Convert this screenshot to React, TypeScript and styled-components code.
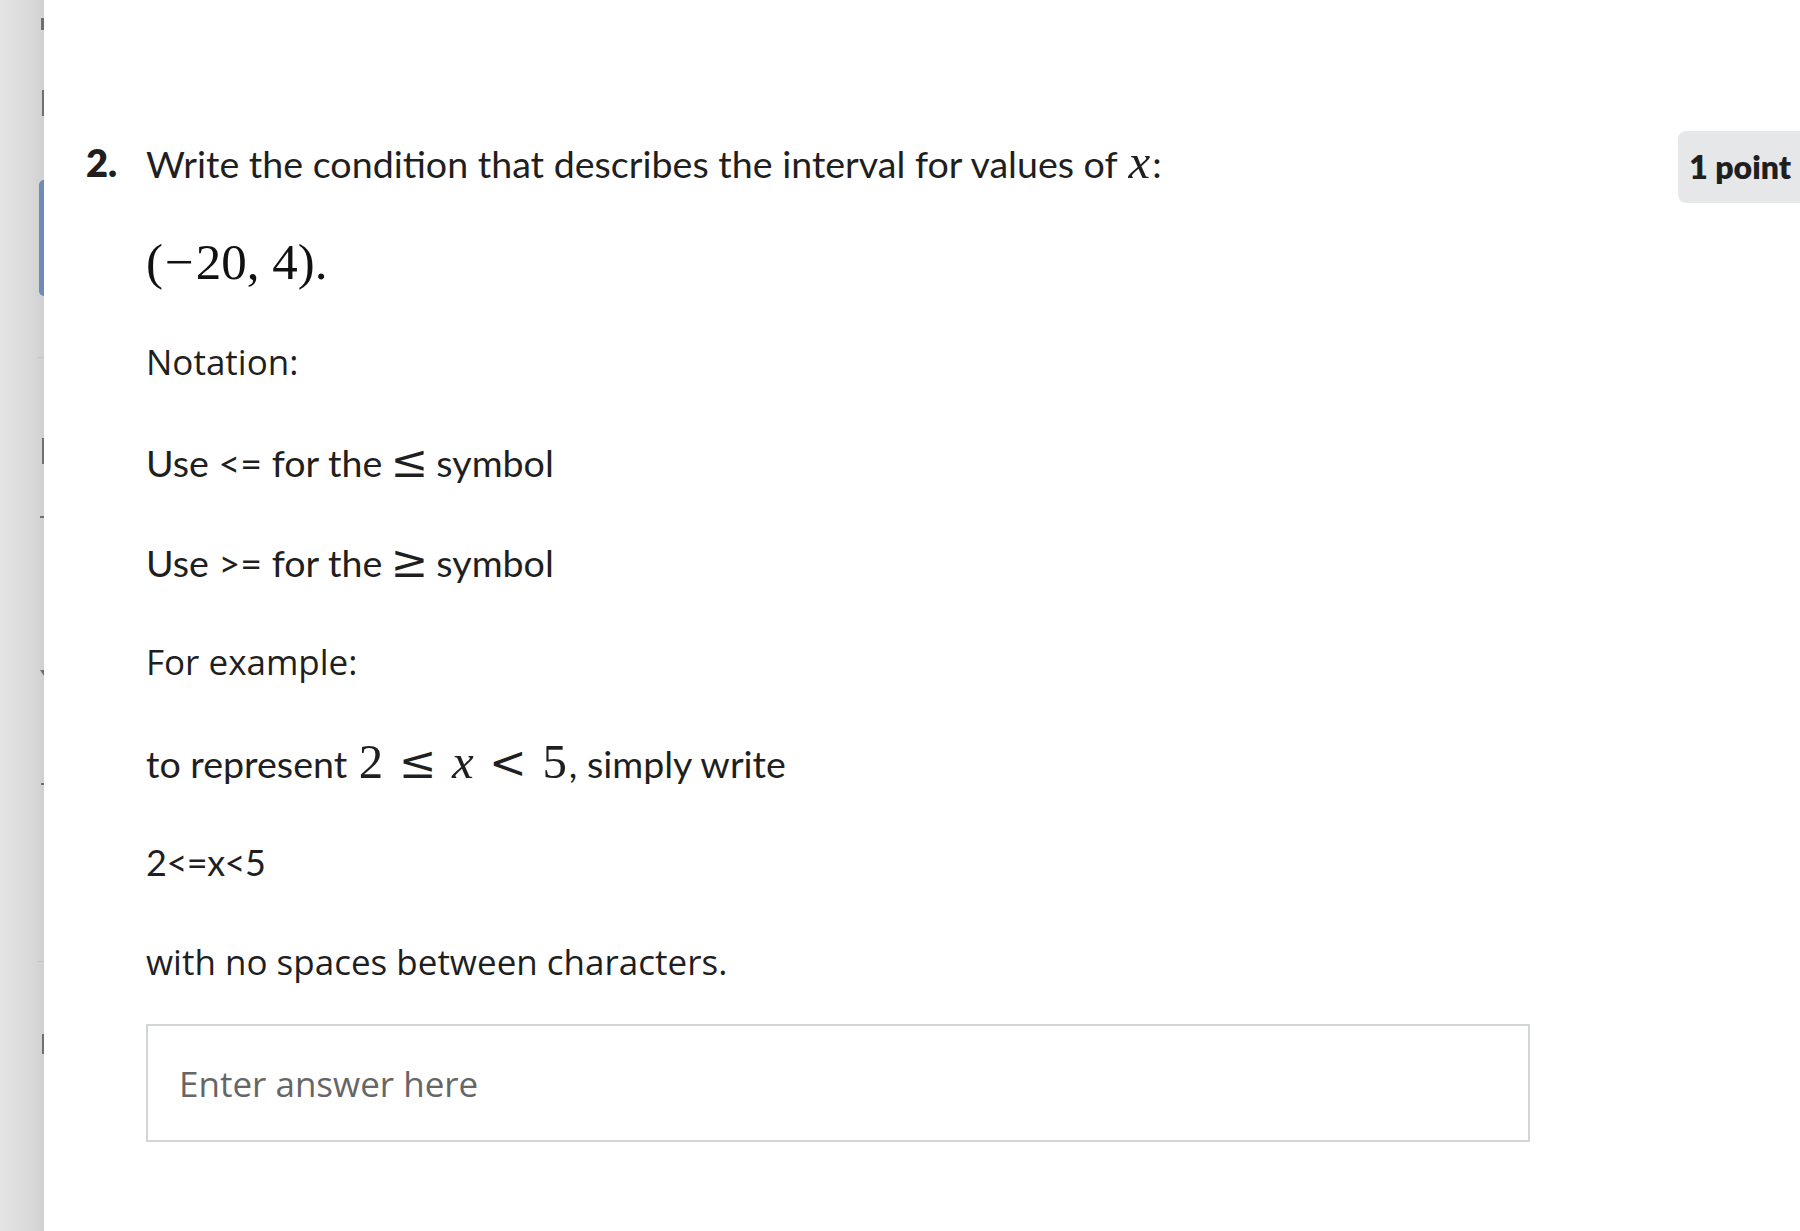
import React from 'react';
import styled, { createGlobalStyle } from 'styled-components';

const GlobalStyle = createGlobalStyle`
  html, body {
    margin: 0;
    padding: 0;
    background: #ffffff;
    overflow: hidden;
  }
  body {
    font-family: 'Lato', 'Liberation Sans', sans-serif;
    color: #1f1f1f;
  }
`;

const Page = styled.div`
  display: flex;
  width: 1800px;
  height: 1231px;
  overflow: hidden;
`;

const Sidebar = styled.aside`
  flex: 0 0 44px;
  height: 100%;
  display: flex;
  flex-direction: column;
  align-items: flex-end;
  background: linear-gradient(90deg, #e4e4e4 0%, #d9d9d9 70%, #d0d0d0 100%);
`;

// the sidebar's own items are cut off; only their right-most pixels peek out
const Tick = styled.span<{ $gap: number; $w: number; $h: number; $light?: boolean }>`
  display: block;
  margin-top: ${(p) => p.$gap}px;
  width: ${(p) => p.$w}px;
  height: ${(p) => p.$h}px;
  background: ${(p) => (p.$light ? '#c6c6c6' : '#6f6f6f')};
`;

const Caret = styled.span<{ $gap: number }>`
  display: block;
  margin-top: ${(p) => p.$gap}px;
  width: 0;
  height: 0;
  border-left: 4px solid transparent;
  border-top: 6px solid #6f6f6f;
`;

const ActiveTab = styled.span<{ $gap: number }>`
  display: block;
  margin-top: ${(p) => p.$gap}px;
  width: 5px;
  height: 116px;
  border-radius: 5px 0 0 5px;
  background: #6f8bb8;
`;

const Main = styled.main`
  flex: 1;
  min-width: 0;
  padding: 131px 0 0 42px;
`;

const QuestionRow = styled.section`
  display: flex;
  align-items: flex-start;
`;

const Number = styled.div`
  flex: 0 0 60px;
  padding-top: 8px;
  font-family: 'Lato', 'Liberation Sans', sans-serif;
  font-weight: 800;
  font-size: 38px;
  line-height: 46px;
`;

const Body = styled.div`
  flex: 1;
  min-width: 0;
  padding-top: 8px;
`;

const Para = styled.p<{ $alt?: boolean; $last?: boolean }>`
  margin: 0 0 ${(p) => (p.$last ? 0 : 54)}px 0;
  height: 46px;
  line-height: 46px;
  white-space: nowrap;
  font-family: ${(p) => (p.$alt ? "'Open Sans', 'Liberation Sans', sans-serif" : "'Lato', 'Liberation Sans', sans-serif")};
  font-size: ${(p) => (p.$alt ? '35px' : '37.6px')};
`;

const Code = styled(Para)`
  font-size: 36px;
  letter-spacing: -0.5px;
`;

const MathPara = styled.p`
  margin: 0 0 54px 0;
  height: 46px;
  line-height: 46px;
  font-family: 'Liberation Serif', 'DejaVu Serif', serif;
  font-size: 51px;
  color: #111111;
`;

const Minus = styled.span`
  padding: 0 0.04em;
`;

const M = styled.span<{ $italic?: boolean }>`
  font-family: 'Liberation Serif', 'DejaVu Serif', serif;
  font-size: 1.3em;
  font-style: ${(p) => (p.$italic ? 'italic' : 'normal')};
  padding: 0 0.04em;
`;

const Rel = styled.span<{ $wide?: boolean }>`
  font-family: 'DejaVu Serif', serif;
  font-weight: 300;
  font-size: 1.2em;
  padding: 0 ${(p) => (p.$wide ? '0.3em' : '0.18em')};
`;

const AnswerInput = styled.input`
  display: block;
  box-sizing: border-box;
  width: 1384px;
  height: 118px;
  margin-top: 39px;
  padding: 0 31px;
  border: 2px solid #d3d6d8;
  border-radius: 0;
  outline: none;
  font-family: 'Open Sans', 'Liberation Sans', sans-serif;
  font-size: 35px;
  color: #1f1f1f;
  &::placeholder {
    color: #666666;
  }
`;

const PointBadge = styled.div`
  flex: 0 0 auto;
  box-sizing: border-box;
  height: 72px;
  padding: 0 22px 0 11px;
  margin-right: -13px;
  border-radius: 8px;
  background: #e6e7e9;
  font-family: 'Lato', 'Liberation Sans', sans-serif;
  font-weight: 800;
  font-size: 32px;
  line-height: 72px;
  white-space: nowrap;
  color: #1f1f1f;
`;

export default function App() {
  return (
    <>
      <GlobalStyle />
      <Page>
        <Sidebar>
          <Tick $gap={18} $w={3} $h={12} />
          <Tick $gap={60} $w={2} $h={26} />
          <ActiveTab $gap={64} />
          <Tick $gap={61} $w={6} $h={1} $light />
          <Tick $gap={80} $w={2} $h={26} />
          <Tick $gap={52} $w={4} $h={2} />
          <Caret $gap={152} />
          <Tick $gap={107} $w={3} $h={2} />
          <Tick $gap={176} $w={6} $h={1} $light />
          <Tick $gap={72} $w={2} $h={20} />
        </Sidebar>
        <Main>
          <QuestionRow>
            <Number>2.</Number>
            <Body>
              <Para>
                Write the condition that describes the interval for values of <M $italic>x</M>:
              </Para>
              <MathPara>
                (<Minus>−</Minus>20, 4).
              </MathPara>
              <Para $alt>Notation:</Para>
              <Para>
                Use &lt;= for the<Rel>≤</Rel>symbol
              </Para>
              <Para>
                Use &gt;= for the<Rel>≥</Rel>symbol
              </Para>
              <Para $alt>For example:</Para>
              <Para>
                to represent <M>2</M>
                <Rel $wide>≤</Rel>
                <M $italic>x</M>
                <Rel $wide>&lt;</Rel>
                <M>5</M>, simply write
              </Para>
              <Code>2&lt;=x&lt;5</Code>
              <Para $alt $last>with no spaces between characters.</Para>
              <AnswerInput placeholder="Enter answer here" />
            </Body>
            <PointBadge>1 point</PointBadge>
          </QuestionRow>
        </Main>
      </Page>
    </>
  );
}
